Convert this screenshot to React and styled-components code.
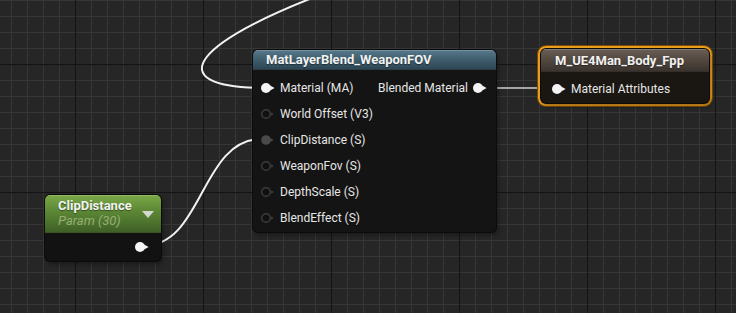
import React from "react";
import styled, { createGlobalStyle, css } from "styled-components";

const Global = createGlobalStyle`
  html, body { margin: 0; padding: 0; background: #262626; }
  body { font-family: Roboto, "Liberation Sans", sans-serif; }
`;

const Canvas = styled.div`
  position: relative;
  width: 736px;
  height: 313px;
  overflow: hidden;
  background-color: #262626;
  background-image:
    linear-gradient(to right, #141414 1px, transparent 1px),
    linear-gradient(to bottom, #141414 1px, transparent 1px),
    linear-gradient(to right, #363636 1px, transparent 1px),
    linear-gradient(to bottom, #363636 1px, transparent 1px);
  background-size: 128px 128px, 128px 128px, 16px 16px, 16px 16px;
  background-position: 75px 64px, 75px 64px, 11px 0, 11px 0;
`;

const Wires = styled.svg`
  position: absolute;
  left: 0;
  top: 0;
  width: 736px;
  height: 313px;
  pointer-events: none;
`;

const NodePos = styled.div`
  position: absolute;
  left: ${(p) => p.$x}px;
  top: ${(p) => p.$y}px;
  width: ${(p) => p.$w}px;
`;

const Selection = styled.div`
  border: 3px solid #eb9d1d;
  border-radius: 8px;
  box-shadow: inset 0 0 0 1px #b8700c, 0 0 0 1px #7a4a08;
`;

const NodeBox = styled.div`
  border-radius: 5px;
  overflow: hidden;
  background: ${(p) => p.$body};
  box-shadow: 0 0 0 1px #0b0b0b, 2px 3px 4px rgba(0, 0, 0, 0.35);
`;

const headerThemes = {
  blue: css`
    background: linear-gradient(to bottom, #587a8d 0%, #41606f 45%, #2d4656 100%);
  `,
  brown: css`
    background: linear-gradient(to bottom, #6a5f58 0%, #52483f 50%, #3a332e 100%);
  `,
  green: css`
    background: linear-gradient(to bottom, #7aa946 0%, #5e8a36 40%, #3f6026 100%);
  `,
};

const Header = styled.div`
  ${(p) => headerThemes[p.$theme]}
  height: ${(p) => p.$h}px;
  box-sizing: border-box;
  padding: ${(p) => p.$pad};
  display: flex;
  align-items: flex-start;
  justify-content: space-between;
  border-bottom: 1px solid rgba(0, 0, 0, 0.5);
  box-shadow: inset 0 1px 0 rgba(255, 255, 255, 0.18);
`;

const TitleBlock = styled.div`
  display: flex;
  flex-direction: column;
`;

const Title = styled.div`
  font-weight: bold;
  font-size: 13px;
  line-height: ${(p) => p.$lh || 18}px;
  color: #f2f2f2;
  text-shadow: 0 1px 1px rgba(0, 0, 0, 0.45);
  white-space: nowrap;
`;

const Subtitle = styled.div`
  font-style: italic;
  font-size: 13px;
  line-height: 16px;
  color: #95af74;
  white-space: nowrap;
`;

const DropArrow = styled.div`
  width: 0;
  height: 0;
  margin-top: 13px;
  border-left: 6px solid transparent;
  border-right: 6px solid transparent;
  border-top: 7px solid #d4d8d0;
`;

const Body = styled.div`
  padding: ${(p) => p.$pad};
  display: flex;
  flex-direction: column;
`;

const Row = styled.div`
  height: ${(p) => p.$h || 26}px;
  display: flex;
  align-items: center;
  justify-content: ${(p) => p.$justify || "space-between"};
`;

const PinLabel = styled.div`
  display: flex;
  align-items: center;
  gap: 4px;
  font-size: 12px;
  color: #e6e6e6;
  white-space: nowrap;
`;

const PinSvg = styled.svg`
  display: block;
  flex: none;
`;

function Pin({ kind = "filled" }) {
  if (kind === "filled") {
    return (
      <PinSvg width="16" height="12" viewBox="0 0 16 12">
        <circle cx="6" cy="6" r="5" fill="#f4f4f4" />
        <polygon points="10.2,3.4 14.6,6 10.2,8.6" fill="#f4f4f4" />
      </PinSvg>
    );
  }
  if (kind === "grey") {
    return (
      <PinSvg width="16" height="12" viewBox="0 0 16 12">
        <circle cx="6" cy="6" r="4.8" fill="#4a4a4a" />
        <polygon points="10.4,4 13.6,6 10.4,8" fill="#4a4a4a" />
      </PinSvg>
    );
  }
  return (
    <PinSvg width="16" height="12" viewBox="0 0 16 12">
      <circle cx="6" cy="6" r="4.3" fill="#111" stroke="#3c3c3c" strokeWidth="1.5" />
      <polygon points="11.2,4.2 13.8,6 11.2,7.8" fill="#3c3c3c" />
    </PinSvg>
  );
}

const inputs = [
  { label: "World Offset (V3)", kind: "empty" },
  { label: "ClipDistance (S)", kind: "grey" },
  { label: "WeaponFov (S)", kind: "empty" },
  { label: "DepthScale (S)", kind: "empty" },
  { label: "BlendEffect (S)", kind: "empty" },
];

export default function App() {
  return (
    <>
      <Global />
      <Canvas>
        <Wires viewBox="0 0 736 313">
          <path
            d="M 266 88 C 156 88, 190 40, 350 -16"
            fill="none"
            stroke="#f2f2f2"
            strokeWidth="2"
          />
          <path
            d="M 143 246 C 204 246, 200 139, 262 139"
            fill="none"
            stroke="#f2f2f2"
            strokeWidth="2"
          />
          <path d="M 480 88 L 556 88" fill="none" stroke="#d0d0d0" strokeWidth="1.6" />
        </Wires>

        <NodePos $x={253} $y={50} $w={243}>
          <NodeBox $body="#141414">
            <Header $theme="blue" $h={20} $pad="1px 13px 0">
              <Title>MatLayerBlend_WeaponFOV</Title>
            </Header>
            <Body $pad="5px 8px 1px 7px">
              <Row>
                <PinLabel>
                  <Pin kind="filled" />
                  Material (MA)
                </PinLabel>
                <PinLabel>
                  Blended Material
                  <Pin kind="filled" />
                </PinLabel>
              </Row>
              {inputs.map((i) => (
                <Row key={i.label} $justify="flex-start">
                  <PinLabel>
                    <Pin kind={i.kind} />
                    {i.label}
                  </PinLabel>
                </Row>
              ))}
            </Body>
          </NodeBox>
        </NodePos>

        <NodePos $x={538} $y={46} $w={174}>
          <Selection>
            <NodeBox $body="#1a1611">
              <Header $theme="brown" $h={23} $pad="3px 14px 0">
                <Title>M_UE4Man_Body_Fpp</Title>
              </Header>
              <Body $pad="4px 8px 1px 10px">
                <Row $justify="flex-start">
                  <PinLabel>
                    <Pin kind="filled" />
                    Material Attributes
                  </PinLabel>
                </Row>
              </Body>
            </NodeBox>
          </Selection>
        </NodePos>

        <NodePos $x={45} $y={195} $w={116}>
          <NodeBox $body="#121212">
            <Header $theme="green" $h={38} $pad="3px 7px 0 13px">
              <TitleBlock>
                <Title $lh={15}>ClipDistance</Title>
                <Subtitle>Param (30)</Subtitle>
              </TitleBlock>
              <DropArrow />
            </Header>
            <Body $pad="0 11px 0 0">
              <Row $h={28} $justify="flex-end">
                <PinLabel>
                  <Pin kind="filled" />
                </PinLabel>
              </Row>
            </Body>
          </NodeBox>
        </NodePos>
      </Canvas>
    </>
  );
}
